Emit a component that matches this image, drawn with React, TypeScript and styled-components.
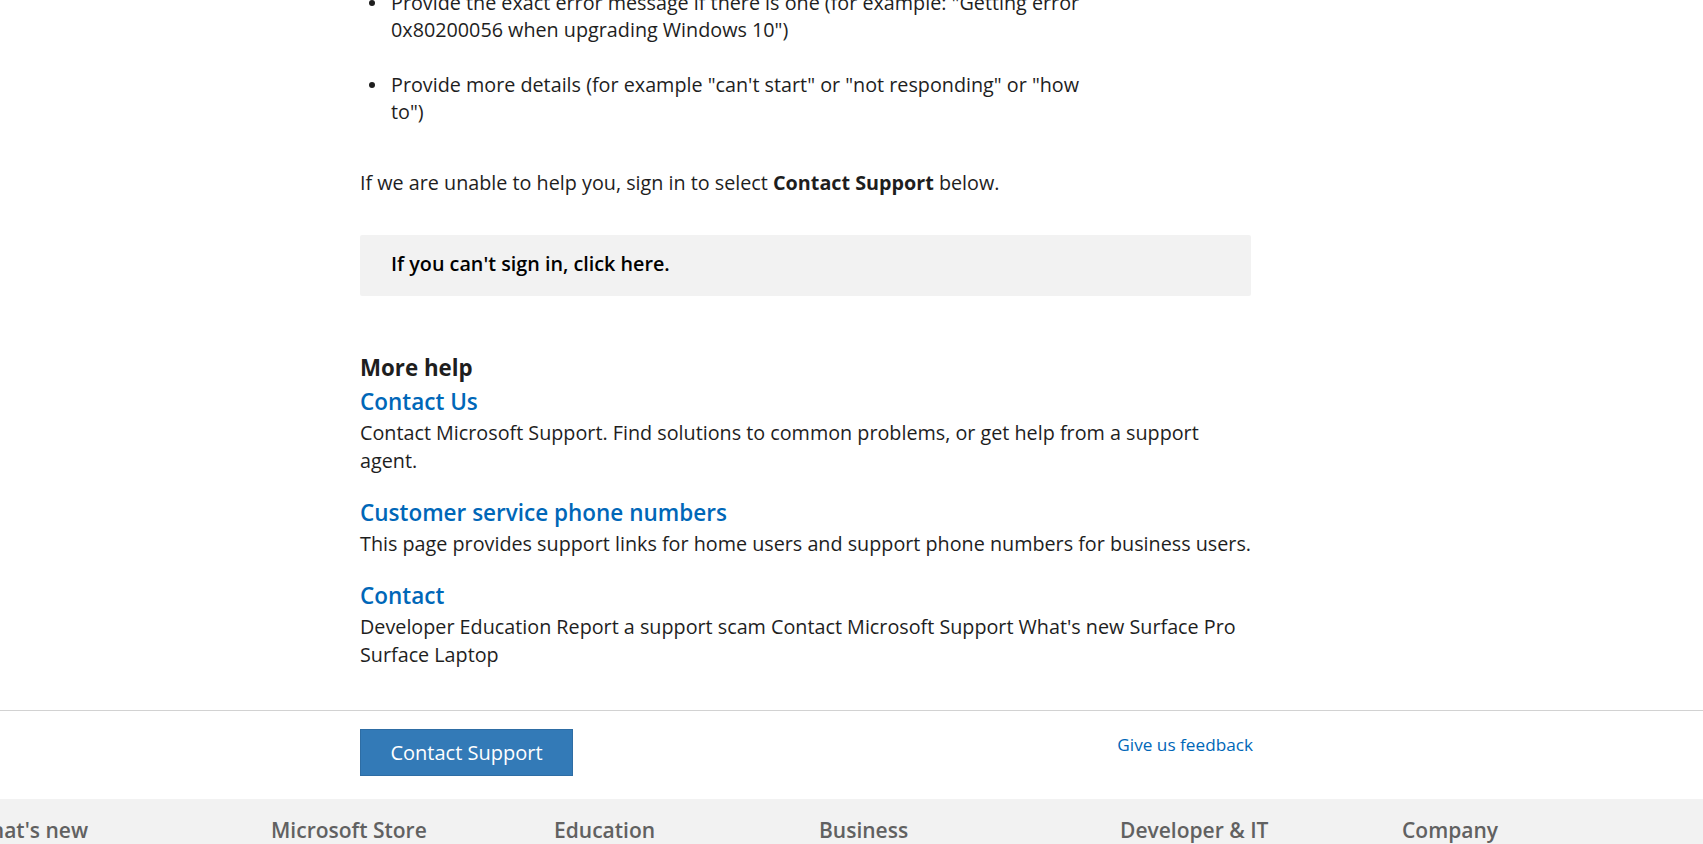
import * as React from 'react'
import styled, { createGlobalStyle } from 'styled-components'

const GlobalStyle = createGlobalStyle`
  html, body {
    margin: 0;
    padding: 0;
    background: #ffffff;
    overflow: hidden;
  }

  body {
    font-family: "Open Sans", "Noto Sans", sans-serif;
    color: #1e1e1e;
  }
`

const moreHelp = [
  {
    title: 'Contact Us',
    text: 'Contact Microsoft Support. Find solutions to common problems, or get help from a support agent.',
  },
  {
    title: 'Customer service phone numbers',
    text: 'This page provides support links for home users and support phone numbers for business users.',
  },
  {
    title: 'Contact',
    text: "Developer Education Report a support scam Contact Microsoft Support What's new Surface Pro Surface Laptop",
  },
]

const footerColumns = [
  { title: "What's new", width: 300 },
  { title: 'Microsoft Store', width: 283 },
  { title: 'Education', width: 265 },
  { title: 'Business', width: 301 },
  { title: 'Developer & IT', width: 282 },
  { title: 'Company', width: 200 },
]

const Page = styled.div`
  width: 1703px;
  height: 844px;
  overflow: hidden;
`

const Article = styled.article`
  width: 891px;
  margin: -11px 0 0 360px;
  font-size: 19.75px;
  line-height: 27px;
`

const TipList = styled.ul`
  margin: 0;
  padding: 0;
  list-style: none;
  width: 745px;

  li {
    position: relative;
    padding-left: 31px;
  }

  li + li {
    margin-top: 28px;
  }

  li::before {
    content: '';
    position: absolute;
    left: 9px;
    top: 11px;
    width: 6px;
    height: 6px;
    border-radius: 50%;
    background: #1e1e1e;
  }
`

const Paragraph = styled.p`
  margin: 44px 0 0;

  strong {
    font-weight: 700;
  }
`

const SignInBox = styled.div`
  margin-top: 39px;
  height: 61px;
  box-sizing: border-box;
  padding: 15px 31px 0;
  background: #f2f2f2;
  border-radius: 2px;
  font-weight: 600;
  color: #000000;
`

const HelpHeading = styled.h2`
  margin: 57px 0 0;
  font-size: 22.3px;
  line-height: 30px;
  font-weight: 700;
  color: #1e1e1e;
`

const HelpItem = styled.div`
  & + & {
    margin-top: 21px;
  }
`

const HelpLink = styled.a`
  display: block;
  margin-top: 2px;
  font-size: 22.5px;
  line-height: 34px;
  font-weight: 600;
  color: #0067b8;
  text-decoration: none;
`

const HelpText = styled.p`
  margin: 0;
  line-height: 28px;
`

const Divider = styled.hr`
  margin: 41px 0 0;
  border: 0;
  border-top: 1px solid #d2d2d2;
`

const ActionRow = styled.div`
  width: 893px;
  margin: 18px 0 0 360px;
  height: 70px;
  display: flex;
  justify-content: space-between;
  align-items: flex-start;
`

const SupportButton = styled.button`
  width: 213px;
  height: 47px;
  padding: 0;
  background: #337ab7;
  border: 1px solid #2e6da4;
  color: #ffffff;
  font-family: inherit;
  font-size: 20px;
  cursor: pointer;
`

const FeedbackLink = styled.a`
  margin-top: 4px;
  font-size: 17.2px;
  line-height: 24px;
  color: #0067b8;
  text-decoration: none;
`

const Footer = styled.footer`
  background: #f2f2f2;
  height: 100px;
  box-sizing: border-box;
  padding-top: 16px;
  overflow: hidden;
`

const FooterRow = styled.div`
  display: flex;
  margin-left: -29px;
`

const FooterHeading = styled.h3<{ $width: number }>`
  flex: 0 0 ${({ $width }) => $width}px;
  margin: 0;
  font-size: 21px;
  line-height: 30px;
  font-weight: 600;
  color: #616161;
  white-space: nowrap;
`

const App: React.FC = () => {
  return (
    <Page>
      <GlobalStyle />
      <Article>
        <TipList>
          <li>
            Provide the exact error message if there is one (for example: "Getting error 0x80200056 when
            upgrading Windows 10")
          </li>
          <li>Provide more details (for example "can't start" or "not responding" or "how to")</li>
        </TipList>
        <Paragraph>
          If we are unable to help you, sign in to select <strong>Contact Support</strong> below.
        </Paragraph>
        <SignInBox>If you can't sign in, click here.</SignInBox>

        <HelpHeading>More help</HelpHeading>
        {moreHelp.map((item) => (
          <HelpItem key={item.title}>
            <HelpLink href="#">{item.title}</HelpLink>
            <HelpText>{item.text}</HelpText>
          </HelpItem>
        ))}
      </Article>

      <Divider />

      <ActionRow>
        <SupportButton>Contact Support</SupportButton>
        <FeedbackLink href="#">Give us feedback</FeedbackLink>
      </ActionRow>

      <Footer>
        <FooterRow>
          {footerColumns.map((col) => (
            <FooterHeading key={col.title} $width={col.width}>
              {col.title}
            </FooterHeading>
          ))}
        </FooterRow>
      </Footer>
    </Page>
  )
}

export default App
